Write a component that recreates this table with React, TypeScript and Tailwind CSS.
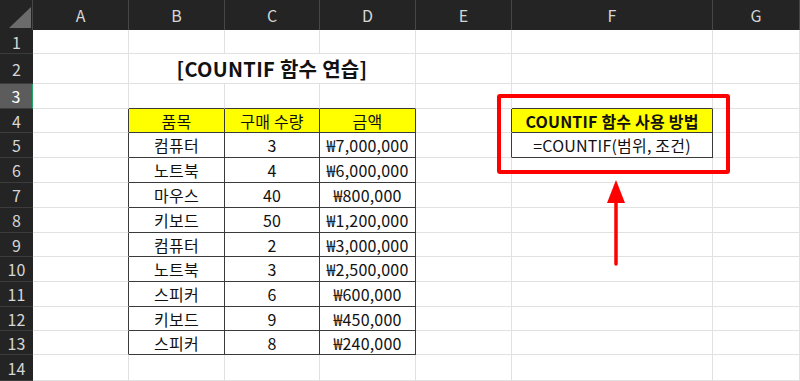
const cols = [
  { key: "A", w: "w-[96px]" },
  { key: "B", w: "w-[96px]" },
  { key: "C", w: "w-[95px]" },
  { key: "D", w: "w-[96px]" },
  { key: "E", w: "w-[96px]" },
  { key: "F", w: "w-[201px]" },
  { key: "G", w: "flex-1" },
];

const rowHeights: Record<number, string> = {
  1: "h-[24px]",
  2: "h-[30px]",
  3: "h-[25px]",
  4: "h-[24px]",
  5: "h-[25px]",
  6: "h-[25px]",
  7: "h-[25px]",
  8: "h-[25px]",
  9: "h-[24px]",
  10: "h-[25px]",
  11: "h-[25px]",
  12: "h-[24px]",
  13: "h-[24px]",
  14: "h-[26px]",
};

const items = [
  ["컴퓨터", "3", "₩7,000,000"],
  ["노트북", "4", "₩6,000,000"],
  ["마우스", "40", "₩800,000"],
  ["키보드", "50", "₩1,200,000"],
  ["컴퓨터", "2", "₩3,000,000"],
  ["노트북", "3", "₩2,500,000"],
  ["스피커", "6", "₩600,000"],
  ["키보드", "9", "₩450,000"],
  ["스피커", "8", "₩240,000"],
];

function content(row: number, c: number): { text?: string; bold?: boolean; yellow?: boolean } {
  if (row === 4 && c >= 1 && c <= 3) return { text: ["품목", "구매 수량", "금액"][c - 1], yellow: true };
  if (row >= 5 && row <= 13 && c >= 1 && c <= 3) return { text: items[row - 5][c - 1] };
  if (row === 4 && c === 5) return { text: "COUNTIF 함수 사용 방법", bold: true, yellow: true };
  if (row === 5 && c === 5) return { text: "=COUNTIF(범위, 조건)" };
  return {};
}

function Cell({ row, c }: { row: number; c: number }) {
  const inTable = row >= 4 && row <= 13 && c >= 1 && c <= 3;
  const inBox = (row === 4 || row === 5) && c === 5;
  const rDark = inTable || inBox || (row >= 4 && row <= 13 && c === 0) || ((row === 4 || row === 5) && c === 4);
  const bDark = inTable || inBox || (row === 3 && c >= 1 && c <= 3) || (row === 3 && c === 5);
  const info = content(row, c);
  return (
    <div
      className={`${cols[c].w} h-full shrink-0 flex items-center justify-center border-b border-r text-[16px] tracking-[0.2px] text-[#111] whitespace-nowrap ${
        rDark ? "border-r-[#3a3a3a]" : "border-r-[#e1e1e1]"
      } ${bDark ? "border-b-[#3a3a3a]" : "border-b-[#e1e1e1]"} ${info.yellow ? "bg-[#ffff00]" : "bg-white"} ${
        info.bold ? "font-bold" : ""
      }`}
    >
      {info.text}
    </div>
  );
}

function RowHead({ n }: { n: number }) {
  const sel = n === 3;
  return (
    <div
      className={`w-[33px] h-full shrink-0 flex items-center justify-center border-b border-[#3c3c3c] text-[16px] ${
        sel ? "bg-[#5c5c5c] text-white border-r border-r-[#21a366]" : "bg-[#242424] text-[#d6d6d6]"
      }`}
    >
      {n}
    </div>
  );
}

export default function App() {
  return (
    <div
      className="relative w-[800px] h-[381px] overflow-hidden bg-white"
      style={{ fontFamily: '"Noto Sans CJK KR", "Noto Sans", sans-serif' }}
    >
      {/* column headers */}
      <div className="flex h-[30px] bg-[#242424] text-[#d6d6d6] text-[16px]">
        <div className="w-[33px] shrink-0 relative border-r border-[#474747]">
          <svg className="absolute left-[9px] top-[7px]" width="22" height="21" viewBox="0 0 22 21">
            <polygon points="22,0 22,21 0,21" fill="#6b6b6b" />
          </svg>
        </div>
        {cols.map((col) => (
          <div
            key={col.key}
            className={`${col.w} shrink-0 flex items-center justify-center border-r border-[#474747]`}
          >
            {col.key}
          </div>
        ))}
      </div>

      {Array.from({ length: 14 }, (_, i) => i + 1).map((row) => (
        <div key={row} className={`flex ${rowHeights[row]}`}>
          <RowHead n={row} />
          {row === 2 ? (
            <>
              <Cell row={2} c={0} />
              <div className="w-[287px] h-full shrink-0 flex items-center justify-center border-b border-r border-[#e1e1e1] text-[20px] font-bold tracking-[0.3px] text-[#111]">
                [COUNTIF 함수 연습]
              </div>
              <Cell row={2} c={4} />
              <Cell row={2} c={5} />
              <Cell row={2} c={6} />
            </>
          ) : (
            cols.map((_, c) => <Cell key={c} row={row} c={c} />)
          )}
        </div>
      ))}

      {/* red highlight box */}
      <div className="absolute left-[497px] top-[94px] w-[233px] h-[80px] border-4 border-[#ff0000] rounded-[3px]" />

      {/* arrow */}
      <svg className="absolute left-[600px] top-[176px]" width="32" height="94" viewBox="0 0 32 94">
        <polygon points="16,4 7,27 25,27" fill="#ff0000" />
        <line x1="16" y1="24" x2="16" y2="88" stroke="#ff0000" strokeWidth="3.5" strokeLinecap="round" />
      </svg>
    </div>
  );
}
